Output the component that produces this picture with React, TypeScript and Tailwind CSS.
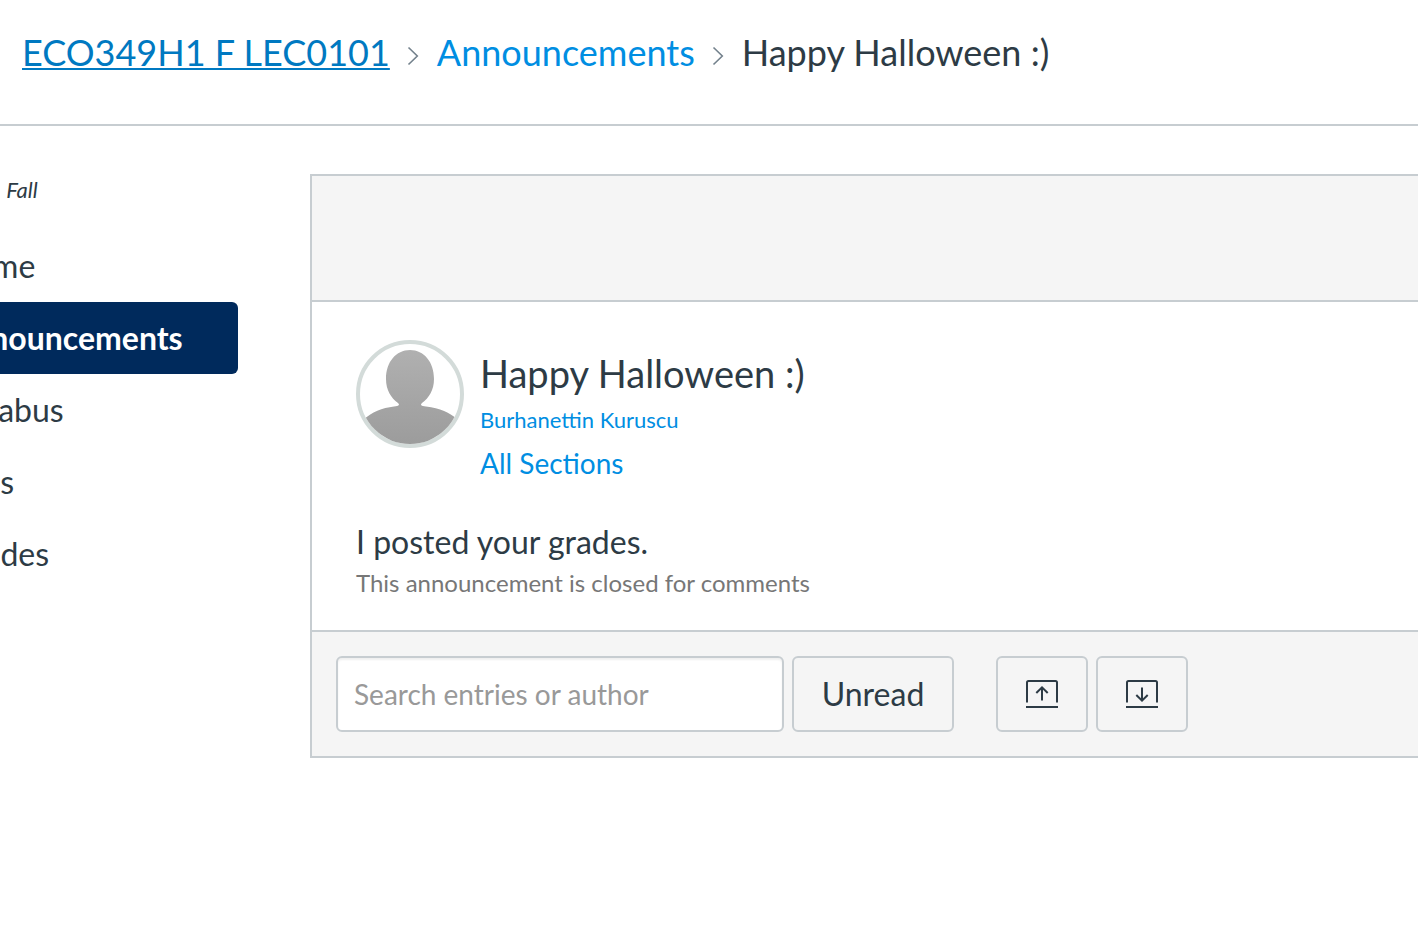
import { useState } from "react";
import clsx from "clsx";

const NAV_ITEMS = [
  { label: "Home", active: false },
  { label: "Announcements", active: true },
  { label: "Syllabus", active: false },
  { label: "Files", active: false },
  { label: "Grades", active: false },
];

function Separator() {
  return (
    <svg
      aria-hidden="true"
      className="mt-2 h-5 w-3 shrink-0"
      viewBox="0 0 12 20"
      fill="none"
      stroke="#73818c"
      strokeWidth="1.6"
    >
      <path d="M1.5 1.5 10.3 10 1.5 18.5" />
    </svg>
  );
}

function Breadcrumbs() {
  return (
    <nav
      aria-label="breadcrumbs"
      className="flex items-center border-b-2 border-[#c7cdd1] px-[22px] pt-[30px] pb-[50px] text-[36px] leading-[44px] whitespace-nowrap"
    >
      <a
        href="#course"
        className="text-[#0079c1] underline decoration-2 underline-offset-2"
      >
        ECO349H1 F LEC0101
      </a>
      <span className="flex w-[47px] justify-center">
        <Separator />
      </span>
      <a href="#announcements" className="text-[#008ee2]">
        Announcements
      </a>
      <span className="flex w-[47px] justify-center">
        <Separator />
      </span>
      <span>Happy Halloween :)</span>
    </nav>
  );
}

function CourseNav() {
  return (
    <aside className="w-[310px] shrink-0 overflow-hidden">
      <div className="-ml-16 w-[302px]">
        <p className="px-3.5 text-[22px] leading-8 italic">2021 Fall</p>
        <ul className="mt-6">
          {NAV_ITEMS.map((item) => (
            <li key={item.label}>
              <a
                href={`#${item.label.toLowerCase()}`}
                aria-current={item.active ? "page" : undefined}
                className={clsx(
                  "block rounded-md px-3.5 py-4 text-[32px] leading-10",
                  item.active && "bg-[#002a5c] font-bold text-white",
                )}
              >
                {item.label}
              </a>
            </li>
          ))}
        </ul>
      </div>
    </aside>
  );
}

function Avatar() {
  return (
    <div className="size-[108px] shrink-0 overflow-hidden rounded-full border-4 border-[#d3dbd9] bg-white">
      <svg viewBox="0 0 100 100" role="img" aria-label="Burhanettin Kuruscu">
        <defs>
          <linearGradient id="person" x1="0" y1="0" x2="0" y2="1">
            <stop offset="0" stopColor="#b0b0b0" />
            <stop offset="1" stopColor="#9c9c9c" />
          </linearGradient>
        </defs>
        <path
          fill="url(#person)"
          d="M50 6C64 6 74 18 74 35C74 46 69 54 62 59C60 61 61 62 66 62.5C80 64 90 69 97 75L100 80V100H0V80L3 76C12 68 22 64 34 62.5C39 62 40 61 38 59C31 54 26 46 26 35C26 18 36 6 50 6Z"
        />
      </svg>
    </div>
  );
}

function TrayIcon({ direction }: { direction: "up" | "down" }) {
  return (
    <svg
      aria-hidden="true"
      className="h-7 w-8"
      viewBox="0 0 32 28"
      fill="none"
      stroke="currentColor"
      strokeWidth="2"
    >
      <path d="M1 22.5V2.5Q1 1 2.5 1H29.5Q31 1 31 2.5V22.5" />
      <path d="M0 27H32" />
      {direction === "up" ? (
        <path d="M16 20.5V7.5M10.3 13 16 7.3 21.7 13" />
      ) : (
        <path d="M16 7.5V20.5M10.3 15 16 20.7 21.7 15" />
      )}
    </svg>
  );
}

function Toolbar() {
  const [query, setQuery] = useState("");
  const button =
    "flex h-[76px] items-center justify-center rounded-md border-2 border-[#c7cdd1] bg-[#f5f5f5]";

  return (
    <div className="flex items-center gap-2 border-t-2 border-[#c7cdd1] bg-[#f5f5f5] p-6">
      <input
        type="text"
        aria-label="Search entries or author"
        placeholder="Search entries or author"
        value={query}
        onChange={(e) => setQuery(e.target.value)}
        className="h-[76px] w-[448px] rounded-md border-2 border-[#c7cdd1] bg-white px-4 text-[28px] shadow-[inset_0_2px_2px_#f0f0f0] placeholder:text-[#999999]"
      />
      <button type="button" className={clsx(button, "w-[162px] text-[32px]")}>
        Unread
      </button>
      <div className="ml-[34px] flex gap-2">
        <button
          type="button"
          aria-label="Collapse replies"
          className={clsx(button, "w-[92px]")}
        >
          <TrayIcon direction="up" />
        </button>
        <button
          type="button"
          aria-label="Expand replies"
          className={clsx(button, "w-[92px]")}
        >
          <TrayIcon direction="down" />
        </button>
      </div>
    </div>
  );
}

function Announcement() {
  return (
    <main className="min-w-0 flex-1 border-y-2 border-l-2 border-[#c7cdd1]">
      <div className="h-[126px] border-b-2 border-[#c7cdd1] bg-[#f5f5f5]" />
      <article className="px-11 pt-[38px] pb-7">
        <header className="flex gap-4">
          <Avatar />
          <div className="pt-3">
            <h1 className="text-[38px] leading-[42px]">Happy Halloween :)</h1>
            <a
              href="#author"
              className="mt-3 block text-[22px] leading-7 text-[#008ee2]"
            >
              Burhanettin Kuruscu
            </a>
            <a
              href="#sections"
              className="mt-3 block text-[28px] leading-[34px] text-[#008ee2]"
            >
              All Sections
            </a>
          </div>
        </header>
        <p className="mt-[42px] text-[32px] leading-10">I posted your grades.</p>
        <p className="mt-1 mb-0.5 text-[24px] leading-[34px] text-[#777777]">
          This announcement is closed for comments
        </p>
      </article>
      <Toolbar />
    </main>
  );
}

export default function App() {
  return (
    <div className="min-h-screen overflow-x-hidden bg-white font-['Lato',sans-serif] text-[#2d3b45]">
      <Breadcrumbs />
      <div className="flex items-start pt-12">
        <CourseNav />
        <Announcement />
      </div>
    </div>
  );
}
